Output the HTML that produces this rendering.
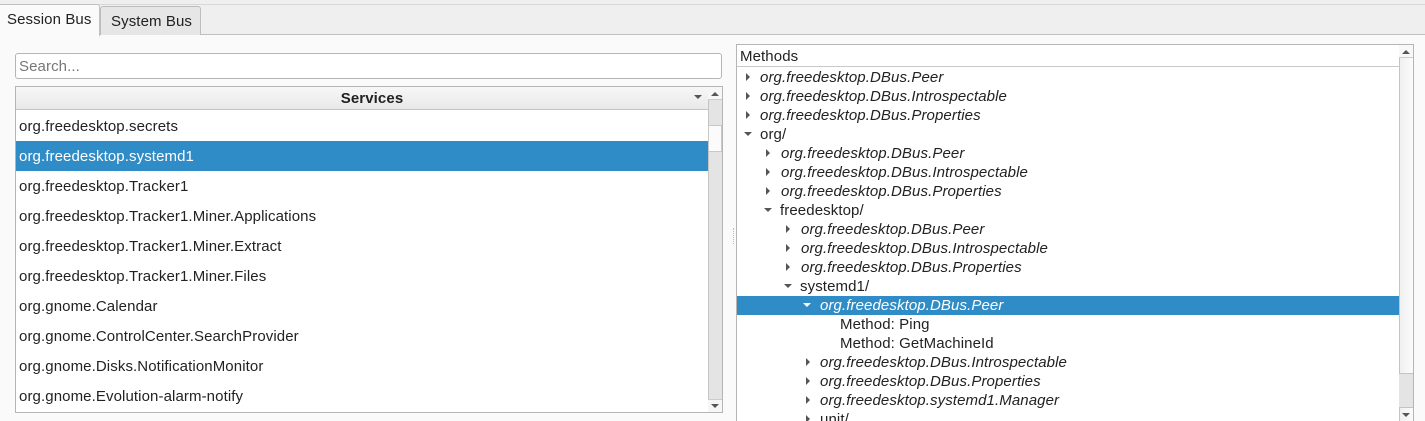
<!DOCTYPE html><html><head><style>
*{margin:0;padding:0;box-sizing:border-box}
html,body{width:1425px;height:421px;overflow:hidden}
body{background:#fafafa;font-family:"Liberation Sans","DejaVu Sans",sans-serif;font-size:15px;letter-spacing:0.1px;color:#222;position:relative}
.a{position:absolute}
.row{position:absolute;height:30px;line-height:30px;padding-top:1px;left:16px;width:692px;padding-left:3px;white-space:nowrap}
.t{position:absolute;height:19px;line-height:19px;padding-top:1px;white-space:nowrap}
.i{font-style:italic}
.ar{position:absolute;width:0;height:0;border-top:4px solid transparent;border-bottom:4px solid transparent;border-left:4px solid #555;top:5px}
.dn{position:absolute;width:0;height:0;border-left:4px solid transparent;border-right:4px solid transparent;border-top:4px solid #555;top:8px}
.sel{background:#308cc6;color:#fff}
</style></head><body>
<div class="a" style="left:0;top:0;width:1425px;height:35px;background:#efefef;border-bottom:1px solid #c0c0c0"></div>
<div class="a" style="left:0;top:4px;width:1425px;height:1px;background:#d8d8d8"></div>
<div class="a" style="left:0;top:4px;width:100px;height:32px;background:#fafafa;border:1px solid #c0c0c0;border-bottom:none;border-left:none;border-radius:0 3px 0 0;line-height:30px;padding-left:7px">Session Bus</div>
<div class="a" style="left:100px;top:6px;width:101px;height:29px;background:#e6e6e6;border:1px solid #bdbdbd;border-bottom:none;border-radius:3px 3px 0 0;line-height:29px;padding-left:10px">System Bus</div>

<div class="a" style="left:15px;top:53px;width:707px;height:26px;background:#fff;border:1px solid #b5b5b5;border-radius:3px;line-height:26px;padding-left:3px;color:#777">Search...</div>

<div class="a" style="left:15px;top:86px;width:708px;height:327px;background:#fff;border:1px solid #b5b5b5"></div>
<div class="a" style="left:16px;top:87px;width:692px;height:23px;background:linear-gradient(#f7f7f7,#e9e9e9);border-bottom:1px solid #c4c4c4;text-align:center;font-weight:bold;line-height:24px;padding-left:20px">Services</div>
<div class="dn" style="left:694px;top:95px"></div>
<div class="a" style="left:708px;top:87px;width:14px;height:325px;background:#e4e4e4;border-left:1px solid #c4c4c4"></div>
<div class="a" style="left:708px;top:87px;width:14px;height:13px;background:#f6f6f6;border-bottom:1px solid #ccc"></div>
<div class="a" style="left:711px;top:92px;border-left:4px solid transparent;border-right:4px solid transparent;border-bottom:4px solid #555"></div>
<div class="a" style="left:708px;top:125px;width:14px;height:27px;background:#fbfbfb;border:1px solid #c8c8c8"></div>
<div class="a" style="left:708px;top:399px;width:14px;height:13px;background:#f6f6f6;border-top:1px solid #ccc"></div>
<div class="a" style="left:711px;top:404px;border-left:4px solid transparent;border-right:4px solid transparent;border-top:4px solid #555"></div>

<div class="row" style="top:111px">org.freedesktop.secrets</div>
<div class="row sel" style="top:141px">org.freedesktop.systemd1</div>
<div class="row" style="top:171px">org.freedesktop.Tracker1</div>
<div class="row" style="top:201px">org.freedesktop.Tracker1.Miner.Applications</div>
<div class="row" style="top:231px">org.freedesktop.Tracker1.Miner.Extract</div>
<div class="row" style="top:261px">org.freedesktop.Tracker1.Miner.Files</div>
<div class="row" style="top:291px">org.gnome.Calendar</div>
<div class="row" style="top:321px">org.gnome.ControlCenter.SearchProvider</div>
<div class="row" style="top:351px">org.gnome.Disks.NotificationMonitor</div>
<div class="row" style="top:381px">org.gnome.Evolution-alarm-notify</div>

<div class="a" style="left:733px;top:228px;width:1px;height:16px;border-left:1px dotted #bbb"></div>

<div class="a" style="left:736px;top:44px;width:678px;height:380px;background:#fff;border:1px solid #b5b5b5"></div>
<div class="a" style="left:737px;top:45px;width:662px;height:22px;border-bottom:1px solid #c8c8c8;line-height:23px;padding-left:3px">Methods</div>
<div class="a" style="left:1399px;top:45px;width:14px;height:376px;background:linear-gradient(90deg,#f0f0f0,#fbfbfb);border-left:1px solid #c4c4c4"></div>
<div class="a" style="left:1399px;top:45px;width:14px;height:13px;border-bottom:1px solid #ccc;background:#f8f8f8"></div>
<div class="a" style="left:1402px;top:50px;border-left:4px solid transparent;border-right:4px solid transparent;border-bottom:4px solid #555"></div>
<div class="a" style="left:1399px;top:373px;width:14px;height:35px;background:#e4e4e4;border-top:1px solid #c4c4c4;border-bottom:1px solid #c4c4c4"></div>
<div class="a" style="left:1402px;top:413px;border-left:4px solid transparent;border-right:4px solid transparent;border-top:4px solid #555"></div>

<div class="a sel" style="left:737px;top:296px;width:662px;height:19px"></div>

<div class="ar" style="left:746px;top:73px"></div><div class="t i" style="left:760px;top:67px">org.freedesktop.DBus.Peer</div>
<div class="ar" style="left:746px;top:92px"></div><div class="t i" style="left:760px;top:86px">org.freedesktop.DBus.Introspectable</div>
<div class="ar" style="left:746px;top:111px"></div><div class="t i" style="left:760px;top:105px">org.freedesktop.DBus.Properties</div>
<div class="dn" style="left:744px;top:132px"></div><div class="t" style="left:760px;top:124px">org/</div>
<div class="ar" style="left:766px;top:149px"></div><div class="t i" style="left:781px;top:143px">org.freedesktop.DBus.Peer</div>
<div class="ar" style="left:766px;top:168px"></div><div class="t i" style="left:781px;top:162px">org.freedesktop.DBus.Introspectable</div>
<div class="ar" style="left:766px;top:187px"></div><div class="t i" style="left:781px;top:181px">org.freedesktop.DBus.Properties</div>
<div class="dn" style="left:764px;top:208px"></div><div class="t" style="left:780px;top:200px">freedesktop/</div>
<div class="ar" style="left:786px;top:225px"></div><div class="t i" style="left:801px;top:219px">org.freedesktop.DBus.Peer</div>
<div class="ar" style="left:786px;top:244px"></div><div class="t i" style="left:801px;top:238px">org.freedesktop.DBus.Introspectable</div>
<div class="ar" style="left:786px;top:263px"></div><div class="t i" style="left:801px;top:257px">org.freedesktop.DBus.Properties</div>
<div class="dn" style="left:784px;top:284px"></div><div class="t" style="left:800px;top:276px">systemd1/</div>
<div class="dn" style="left:803px;top:303px;border-top-color:#fff"></div><div class="t i" style="left:820px;top:295px;color:#fff">org.freedesktop.DBus.Peer</div>
<div class="t" style="left:840px;top:314px">Method: Ping</div>
<div class="t" style="left:840px;top:333px">Method: GetMachineId</div>
<div class="ar" style="left:806px;top:358px"></div><div class="t i" style="left:820px;top:352px">org.freedesktop.DBus.Introspectable</div>
<div class="ar" style="left:806px;top:377px"></div><div class="t i" style="left:820px;top:371px">org.freedesktop.DBus.Properties</div>
<div class="ar" style="left:806px;top:396px"></div><div class="t i" style="left:820px;top:390px">org.freedesktop.systemd1.Manager</div>
<div class="ar" style="left:806px;top:415px"></div><div class="t" style="left:820px;top:409px">unit/</div>
</body></html>
